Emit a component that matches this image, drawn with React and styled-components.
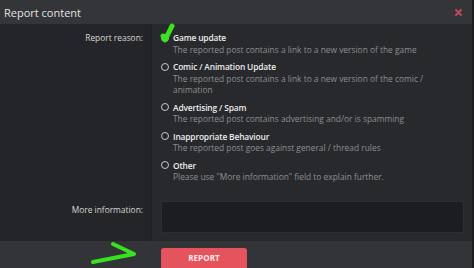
import React from "react";
import styled, { createGlobalStyle } from "styled-components";

const Global = createGlobalStyle`
  html, body { margin: 0; padding: 0; background: #252629; }
  body { font-family: "Open Sans", "Noto Sans", sans-serif; }
  * { box-sizing: border-box; }
`;

const Dialog = styled.div`
  position: relative;
  width: 474px;
  height: 268px;
  display: flex;
  flex-direction: column;
  background: #252629;
  overflow: hidden;
  border-right: 2px solid #1c1d1f;
`;

const Header = styled.div`
  height: 24px;
  flex: none;
  display: flex;
  align-items: center;
  justify-content: space-between;
  padding: 0 10px 0 4px;
  background: #343538;
  color: #e2e2e2;
  font-size: 11px;
`;

const CloseBtn = styled.span`
  display: flex;
  width: 7px;
  height: 7px;
`;

const Body = styled.div`
  flex: 1;
  min-height: 0;
  overflow: hidden;
  display: grid;
  grid-template-columns: 152px 1fr;
  grid-template-rows: auto 1fr;
`;

const Label = styled.div`
  background: #242528;
  border-right: 1px solid #1e1f22;
  text-align: right;
  padding: ${(p) => p.$pad};
  color: #d6d6d6;
  font-size: 8.4px;
  line-height: 11.5px;
`;

const Cell = styled.div`
  background: #28292c;
  padding: ${(p) => p.$pad};
`;

const Options = styled.div`
  display: flex;
  flex-direction: column;
  gap: 6px;
`;

const Option = styled.div`
  display: grid;
  grid-template-columns: 8px 1fr;
  column-gap: 4px;
  font-size: 8.4px;
  line-height: 11.5px;
`;

const Radio = styled.span`
  width: 8px;
  height: 8px;
  margin-top: 1.5px;
  border-radius: 50%;
  border: 1px solid #c9c9c9;
`;

const OptTitle = styled.div`
  color: #ececec;
  font-weight: 600;
  letter-spacing: -0.15px;
`;

const OptDesc = styled.div`
  grid-column: 2;
  color: #8c8e92;
  padding-right: 22px;
`;

const TextArea = styled.div`
  height: 32px;
  background: #1b1d20;
  border: 1px solid #2c2e31;
  border-radius: 3px;
`;

const Footer = styled.div`
  height: 27px;
  flex: none;
  display: grid;
  grid-template-columns: 152px 1fr;
  background: #333437;
  padding-top: 7px;
`;

const ReportBtn = styled.button`
  grid-column: 2;
  justify-self: start;
  margin-left: 9px;
  width: 86px;
  height: 24px;
  border: none;
  border-radius: 3px 3px 0 0;
  background: #e5545c;
  color: #fbe9ea;
  font-family: "Open Sans", "Noto Sans", sans-serif;
  font-weight: 700;
  font-size: 8px;
  letter-spacing: 0.1px;
  padding: 0 0 6px;
`;

const Scribble = styled.svg`
  position: absolute;
  left: ${(p) => p.$x}px;
  top: ${(p) => p.$y}px;
  pointer-events: none;
`;

const options = [
  ["Game update", "The reported post contains a link to a new version of the game"],
  ["Comic / Animation Update", "The reported post contains a link to a new version of the comic / animation"],
  ["Advertising / Spam", "The reported post contains advertising and/or is spamming"],
  ["Inappropriate Behaviour", "The reported post goes against general / thread rules"],
  ["Other", "Please use \"More information\" field to explain further."],
];

export default function App() {
  return (
    <>
      <Global />
      <Dialog>
        <Header>
          <span>Report content</span>
          <CloseBtn>
            <svg width="7" height="7" viewBox="0 0 7 7">
              <path d="M1 1L6 6M6 1L1 6" stroke="#c64a5e" strokeWidth="1.8" strokeLinecap="round" />
            </svg>
          </CloseBtn>
        </Header>
        <Body>
          <Label $pad="8px 8px 0 0">Report reason:</Label>
          <Cell $pad="8px 8px 0 9px">
            <Options>
              {options.map(([t, d]) => (
                <Option key={t}>
                  <Radio />
                  <OptTitle>{t}</OptTitle>
                  <OptDesc>{d}</OptDesc>
                </Option>
              ))}
            </Options>
          </Cell>
          <Label $pad="21px 8px 0 0">More information:</Label>
          <Cell $pad="18px 8px 8px 9px">
            <TextArea />
          </Cell>
        </Body>
        <Footer>
          <ReportBtn>REPORT</ReportBtn>
        </Footer>
        <Scribble $x={158} $y={22} width="20" height="24" viewBox="0 0 20 24">
          <path d="M5 14 L7 18 L14 4" stroke="#38e21f" strokeWidth="5" fill="none" strokeLinecap="round" strokeLinejoin="round" />
        </Scribble>
        <Scribble $x={88} $y={240} width="52" height="28" viewBox="0 0 52 28">
          <path d="M25 4 L46 14 L5 22" stroke="#38e21f" strokeWidth="4" fill="none" strokeLinecap="round" strokeLinejoin="round" />
        </Scribble>
      </Dialog>
    </>
  );
}
